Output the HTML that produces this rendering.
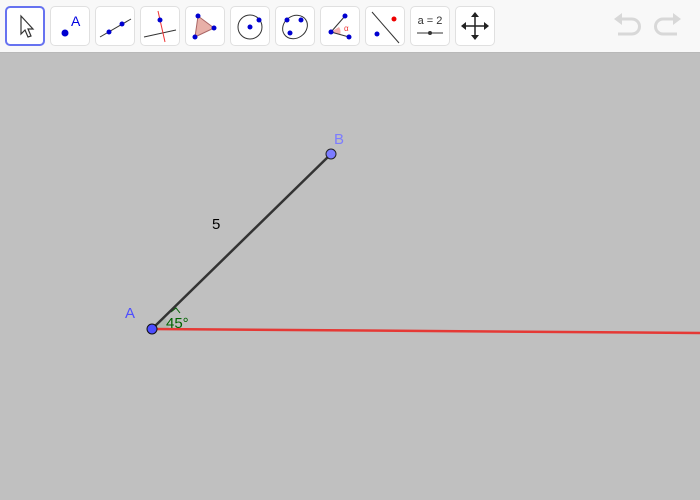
<!DOCTYPE html>
<html><head><style>
body{margin:0;width:700px;height:500px;overflow:hidden;background:#c0c0c0;font-family:"Liberation Sans",sans-serif}
#tb{position:absolute;left:0;top:0;width:700px;height:52px;background:#f8f8f8;border-bottom:1px solid #b8b8b8}
.b{position:absolute;top:6px;width:38px;height:38px;border:1px solid #e0e0e0;border-radius:5px;background:#fff}
.b svg{position:absolute;left:0;top:0}
.sel{border:2px solid #6672f0;width:36px;height:36px}
</style></head><body>
<div id="tb">
<div class="b sel" style="left:5px"><svg width="36" height="36"><path d="M14 8 L14 26 L18 22 L21 29 L24 28 L21 21 L26 21 Z" fill="#fff" stroke="#333" stroke-width="1.2"/></svg></div>
<div class="b" style="left:50px"><svg width="38" height="38"><circle cx="14" cy="26" r="3.5" fill="#0000d0"/><text x="20" y="19" font-size="14" fill="#0000e0" font-family="Liberation Sans">A</text></svg></div>
<div class="b" style="left:95px"><svg width="38" height="38"><line x1="4" y1="30" x2="35" y2="12" stroke="#333"/><circle cx="13" cy="25" r="2.5" fill="#0000d0"/><circle cx="26" cy="17" r="2.5" fill="#0000d0"/></svg></div>
<div class="b" style="left:140px"><svg width="38" height="38"><line x1="3" y1="30" x2="35" y2="23" stroke="#333"/><line x1="17" y1="4" x2="24" y2="35" stroke="#e33"/><circle cx="19" cy="13" r="2.5" fill="#0000d0"/></svg></div>
<div class="b" style="left:185px"><svg width="38" height="38"><polygon points="12,9 28,21 9,30" fill="#e8b0a8" stroke="#a66"/><circle cx="12" cy="9" r="2.5" fill="#0000d0"/><circle cx="28" cy="21" r="2.5" fill="#0000d0"/><circle cx="9" cy="30" r="2.5" fill="#0000d0"/></svg></div>
<div class="b" style="left:230px"><svg width="38" height="38"><circle cx="19" cy="20" r="12" fill="none" stroke="#333"/><circle cx="19" cy="20" r="2.5" fill="#0000d0"/><circle cx="28" cy="13" r="2.5" fill="#0000d0"/></svg></div>
<div class="b" style="left:275px"><svg width="38" height="38"><ellipse cx="19" cy="20" rx="13" ry="11" transform="rotate(-35 19 20)" fill="none" stroke="#333"/><circle cx="11" cy="13" r="2.5" fill="#0000d0"/><circle cx="25" cy="13" r="2.5" fill="#0000d0"/><circle cx="14" cy="26" r="2.5" fill="#0000d0"/></svg></div>
<div class="b" style="left:320px"><svg width="38" height="38"><path d="M10 25 L18 20 A9 9 0 0 1 19 28 Z" fill="#f4b0b0"/><line x1="10" y1="25" x2="24" y2="9" stroke="#333"/><line x1="10" y1="25" x2="28" y2="30" stroke="#333"/><circle cx="10" cy="25" r="2.5" fill="#0000d0"/><circle cx="24" cy="9" r="2.5" fill="#0000d0"/><circle cx="28" cy="30" r="2.5" fill="#0000d0"/><text x="23" y="24" font-size="8" fill="#e33">α</text></svg></div>
<div class="b" style="left:365px"><svg width="38" height="38"><line x1="6" y1="5" x2="33" y2="36" stroke="#333"/><circle cx="28" cy="12" r="2.5" fill="#e00"/><circle cx="11" cy="27" r="2.5" fill="#0000d0"/></svg></div>
<div class="b" style="left:410px"><svg width="38" height="38"><text x="19" y="17" font-size="11" text-anchor="middle" fill="#333" font-family="Liberation Sans">a = 2</text><line x1="6" y1="26" x2="32" y2="26" stroke="#333"/><circle cx="19" cy="26" r="2" fill="#333"/></svg></div>
<div class="b" style="left:455px"><svg width="38" height="38"><path d="M19 7 V31 M7 19 H31" stroke="#222" stroke-width="1.5"/><path d="M19 5 L15 10 H23Z M19 33 L15 28 H23Z M5 19 L10 15 V23Z M33 19 L28 15 V23Z" fill="#222"/></svg></div>
<svg style="position:absolute;left:610px;top:10px" width="75" height="32"><g fill="none" stroke="#d8d8d8" stroke-width="3"><path d="M10 9 H22 A7.5 7.5 0 0 1 22 24 H8"/><path d="M65 9 H53 A7.5 7.5 0 0 0 53 24 H67"/></g><path d="M4 9 L12 3 V15Z M71 9 L63 3 V15Z" fill="#d8d8d8"/></svg>
</div>
<svg style="position:absolute;left:0;top:0" width="700" height="500">
<path d="M152 329 L164 317 A17 17 0 0 1 169 329.1 Z" fill="#9ab09a" opacity="0.4"/>
<path d="M171 312 L176 308 L180 313" fill="none" stroke="#006400" stroke-width="1"/>
<line x1="152" y1="329" x2="700" y2="333" stroke="#e53935" stroke-width="2.5"/>
<line x1="152" y1="329" x2="331" y2="154" stroke="#333" stroke-width="2.5"/>
<circle cx="152" cy="329" r="5" fill="#4d4dff" stroke="#111"/>
<circle cx="331" cy="154" r="5" fill="#7c7cff" stroke="#222"/>
<text x="125" y="318" font-size="15" fill="#4d4dff" font-family="Liberation Sans">A</text>
<text x="334" y="144" font-size="15" fill="#7c7cff" font-family="Liberation Sans">B</text>
<text x="212" y="229" font-size="15" fill="#000" font-family="Liberation Sans">5</text>
<text x="166" y="328" font-size="15" fill="#006400" font-family="Liberation Sans">45°</text>
</svg>
</body></html>
